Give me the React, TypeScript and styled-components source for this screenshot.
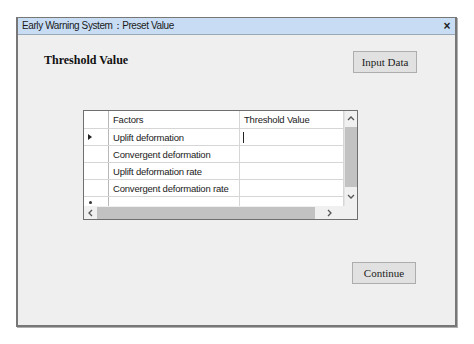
import styled, { createGlobalStyle } from 'styled-components';

const GlobalStyle = createGlobalStyle`
	html, body {
		margin: 0;
		padding: 0;
		background: #ffffff;
	}
`;

const Page = styled.div`
	padding: 17px 0 0 16px;
	width: 474px;
	height: 344px;
	box-sizing: border-box;
`;

const Window = styled.div`
	width: 441px;
	height: 310px;
	box-sizing: border-box;
	border: 2px solid #777777;
	border-top-width: 1px;
	background: #efefef;
	box-shadow: 1px 1px 0 #b0b0b0;
	display: flex;
	flex-direction: column;
`;

const TitleBar = styled.div`
	height: 16px;
	background: #c8ddf4;
	border-bottom: 1px solid #9aa9b8;
	display: flex;
	align-items: center;
	justify-content: space-between;
	padding: 0 5px 0 4px;
	font-family: "Liberation Sans", Arial, sans-serif;
	font-size: 10px;
	letter-spacing: -0.4px;
	color: #1a1a1a;
`;

const CloseMark = styled.span`
	font-weight: bold;
	font-size: 12px;
	color: #222;
`;

const Body = styled.div`
	flex: 1;
	display: flex;
	flex-direction: column;
	padding: 16px 38px 0 26px;
`;

const TopRow = styled.div`
	display: flex;
	justify-content: space-between;
	align-items: flex-start;
`;

const Heading = styled.h2`
	margin: 2px 0 0 0;
	font-family: "Liberation Serif", "Times New Roman", serif;
	font-weight: bold;
	font-size: 12px;
	color: #111;
`;

const Button = styled.button`
	width: 64px;
	height: 22px;
	padding: 0;
	background: #e1e1e1;
	border: 1px solid #adadad;
	font-family: "Liberation Serif", "Times New Roman", serif;
	font-size: 11px;
	color: #222;
`;

const GridFrame = styled.div`
	margin: 37px 0 0 39px;
	width: 275px;
	height: 110px;
	box-sizing: border-box;
	border: 1px solid #6f6f6f;
	background: #ffffff;
	display: grid;
	grid-template-columns: 260px 13px;
	grid-template-rows: 95px 13px;
	font-family: "Liberation Sans", Arial, sans-serif;
	font-size: 9.5px;
	letter-spacing: -0.2px;
	color: #1a1a1a;
`;

const DataArea = styled.div`
	overflow: hidden;
`;

const Row = styled.div<{ height: number; last?: boolean }>`
	display: grid;
	grid-template-columns: 25px 131px 104px;
	height: ${({ height }) => `${height}px`};
	box-sizing: border-box;
	border-bottom: ${({ last }) => (last ? 'none' : '1px solid #d6d6d6')};
`;

const Cell = styled.div`
	border-right: 1px solid #d6d6d6;
	display: flex;
	align-items: center;
	padding-left: 4px;
	white-space: nowrap;
	overflow: hidden;
`;

const RowHead = styled.div`
	border-right: 1px solid #b8b8b8;
	display: flex;
	align-items: center;
	padding-left: 4px;
`;

const Marker = styled.span`
	width: 0;
	height: 0;
	border-top: 3px solid transparent;
	border-bottom: 3px solid transparent;
	border-left: 4px solid #222;
`;

const NewRowDot = styled.span`
	width: 3px;
	height: 3px;
	border-radius: 50%;
	background: #333;
	margin-left: 1px;
	margin-top: 2px;
`;

const Caret = styled.span`
	width: 1px;
	height: 11px;
	background: #222;
	margin-left: -1px;
`;

const VScroll = styled.div`
	background: #f0f0f0;
	border-left: 1px solid #e4e4e4;
	display: flex;
	flex-direction: column;
	align-items: center;
`;

const Arrow = styled.div<{ size: number }>`
	height: ${({ size }) => `${size}px`};
	width: 100%;
	display: flex;
	align-items: center;
	justify-content: center;
	color: #555;
	flex-shrink: 0;
`;

const VThumb = styled.div`
	width: 12px;
	height: 60px;
	background: #c2c2c2;
`;

const HScroll = styled.div`
	background: #f0f0f0;
	display: flex;
	align-items: center;
`;

const HThumb = styled.div`
	width: 218px;
	height: 12px;
	background: #c2c2c2;
`;

const Corner = styled.div`
	background: #f0f0f0;
`;

const BottomRow = styled.div`
	display: flex;
	justify-content: flex-end;
	margin-top: 42px;
	padding-right: 1px;
`;

const Chevron = ({ dir }: { dir: 'up' | 'down' | 'left' | 'right' }) => {
	const paths: Record<string, string> = {
		up: 'M1 5 L4 2 L7 5',
		down: 'M1 2 L4 5 L7 2',
		left: 'M5 1 L2 4 L5 7',
		right: 'M2 1 L5 4 L2 7',
	};
	return (
		<svg width="8" height="8" viewBox="0 0 8 8">
			<path d={paths[dir]} fill="none" stroke="#555" strokeWidth="1.3" />
		</svg>
	);
};

const factors = [
	'Uplift deformation',
	'Convergent deformation',
	'Uplift deformation rate',
	'Convergent deformation rate',
];

export default function App() {
	return (
		<>
			<GlobalStyle />
			<Page>
				<Window>
					<TitleBar>
						<span>Early Warning System：Preset Value</span>
						<CloseMark>×</CloseMark>
					</TitleBar>
					<Body>
						<TopRow>
							<Heading>Threshold Value</Heading>
							<Button>Input Data</Button>
						</TopRow>

						<GridFrame>
							<DataArea>
								<Row height={18}>
									<RowHead />
									<Cell>Factors</Cell>
									<Cell>Threshold Value</Cell>
								</Row>
								{factors.map((f, i) => (
									<Row height={17} key={f}>
										<RowHead>{i === 0 && <Marker />}</RowHead>
										<Cell>{f}</Cell>
										<Cell>{i === 0 && <Caret />}</Cell>
									</Row>
								))}
								<Row height={9} last>
									<RowHead><NewRowDot /></RowHead>
									<Cell />
									<Cell />
								</Row>
							</DataArea>
							<VScroll>
								<Arrow size={16}><Chevron dir="up" /></Arrow>
								<VThumb />
								<Arrow size={19}><Chevron dir="down" /></Arrow>
							</VScroll>
							<HScroll>
								<Arrow size={13} style={{ width: 13 }}><Chevron dir="left" /></Arrow>
								<HThumb />
								<Arrow size={13} style={{ flex: 1 }}><Chevron dir="right" /></Arrow>
							</HScroll>
							<Corner />
						</GridFrame>

						<BottomRow>
							<Button>Continue</Button>
						</BottomRow>
					</Body>
				</Window>
			</Page>
		</>
	);
}
